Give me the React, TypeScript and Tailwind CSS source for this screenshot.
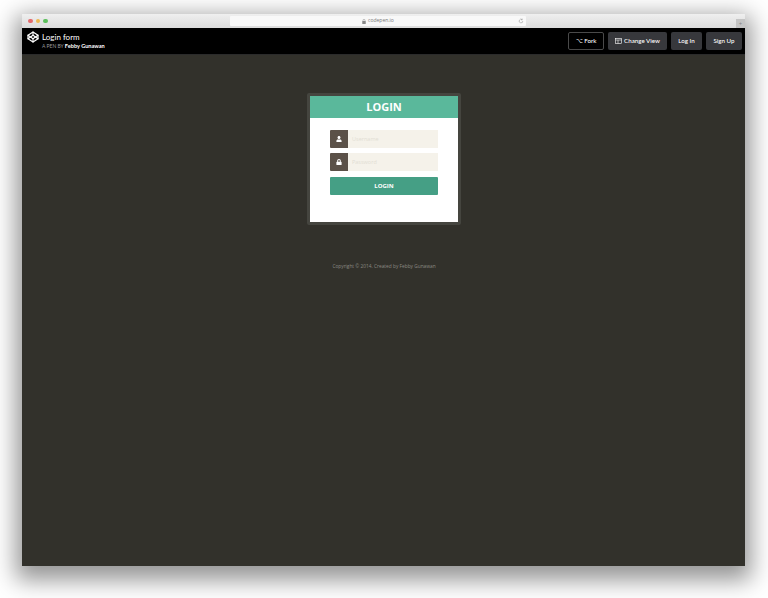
import { Codepen } from "lucide-react";
import { FaUser, FaLock } from "react-icons/fa";

const sans = "font-['Open_Sans','Liberation_Sans',sans-serif]";
const lato = "font-['Lato','Liberation_Sans',sans-serif]";

function NavButton({ children, className = "" }: { children: React.ReactNode; className?: string }) {
  return (
    <div className={`h-[18px] flex items-center justify-center rounded-[2px] bg-[#37383c] text-white text-[6.2px] font-medium ${lato} ${className}`}>
      {children}
    </div>
  );
}

function Field({ icon, placeholder, className = "" }: { icon: React.ReactNode; placeholder: string; className?: string }) {
  return (
    <div className={`flex h-[18px] ${className}`}>
      <div className="w-[18px] flex items-center justify-center bg-[#5b5148] text-white rounded-l-[1px]">{icon}</div>
      <div className={`flex-1 bg-[#f5f2ea] flex items-center pl-[4px] text-[5.5px] text-[#e2ded4] ${sans}`}>{placeholder}</div>
    </div>
  );
}

export default function App() {
  return (
    <div className="w-[768px] h-[598px] bg-white overflow-hidden pt-[14px] pl-[22px]">
      <div className="w-[723px] h-[552px] flex flex-col shadow-[0_8px_22px_6px_rgba(0,0,0,0.42)]">
        <div className="h-[14px] flex items-center bg-gradient-to-b from-[#efefef] to-[#dcdcdc] pl-[6px] relative">
          <div className="flex gap-[3px] w-[202px]">
            <span className="w-[4.5px] h-[4.5px] rounded-full bg-[#e46a6c]" />
            <span className="w-[4.5px] h-[4.5px] rounded-full bg-[#eeb950]" />
            <span className="w-[4.5px] h-[4.5px] rounded-full bg-[#5cc05c]" />
          </div>
          <div className={`w-[296px] h-[10px] bg-[#f8f8f8] rounded-[1px] flex items-center justify-center relative text-[5px] text-[#777777] ${sans}`}>
            <svg width="4" height="5" viewBox="0 0 8 10" className="mr-[2px]" fill="#888888">
              <rect x="0.5" y="4" width="7" height="6" rx="1" />
              <path d="M2 4V2.6a2 2 0 0 1 4 0V4" fill="none" stroke="#888888" />
            </svg>
            codepen.io
            <svg width="6" height="6" viewBox="0 0 10 10" className="absolute right-[2px]" fill="none" stroke="#999999" strokeWidth="1">
              <path d="M8 5a3 3 0 1 1-1-2.2M7 1v2H5" />
            </svg>
          </div>
          <div className="ml-auto w-[9px] h-[9px] self-end bg-[#c4c4c4] flex items-center justify-center text-[6px] leading-none text-[#888888]">+</div>
        </div>

        <div className="h-[27px] bg-black flex items-start border-b border-[#2b2b2b] pl-[5px] pr-[3px]">
          <Codepen size={12} color="#ffffff" strokeWidth={2.4} className="mt-[3px]" />
          <div className={`ml-[3px] mt-[4px] flex flex-col ${lato}`}>
            <div className="text-white text-[8px] leading-[10px]">Login form</div>
            <div className="text-[5px] leading-[7px] text-[#9a9a9a]">
              A PEN BY <span className="text-white font-bold text-[5.6px]">Febby Gunawan</span>
            </div>
          </div>
          <div className="ml-auto mt-[4px] flex gap-[4px]">
            <NavButton className="w-[36px] bg-black border border-[#4a4a4a]">⌥ Fork</NavButton>
            <NavButton className="w-[59px]">
              <svg width="7" height="6" viewBox="0 0 14 12" className="mr-[2px]" fill="none" stroke="#ffffff" strokeWidth="1.2">
                <rect x="1" y="1" width="12" height="10" />
                <path d="M1 4h12M6 4v7" />
              </svg>
              Change View
            </NavButton>
            <NavButton className="w-[31px]">Log In</NavButton>
            <NavButton className="w-[36px]">Sign Up</NavButton>
          </div>
        </div>

        <div className="flex-1 bg-[#32312b] flex flex-col items-center pt-[38px] pl-[1px]">
          <div className="w-[154px] border-[3px] border-[#45453f] rounded-[2px]">
            <div className={`h-[22px] bg-[#5ab89b] flex items-center justify-center text-white text-[11px] font-bold ${sans}`}>LOGIN</div>
            <div className="h-[104px] bg-white px-[20px] pt-[12px] flex flex-col">
              <Field icon={<FaUser size={6} />} placeholder="Username" />
              <Field icon={<FaLock size={6} />} placeholder="Password" className="mt-[5px]" />
              <div className={`mt-[6px] h-[18px] bg-[#459f85] rounded-[1px] flex items-center justify-center text-white text-[6px] font-bold ${sans}`}>LOGIN</div>
            </div>
          </div>
          <div className={`mt-[37px] text-[4.8px] leading-[8px] text-[#8b8a83] ${sans}`}>Copyright © 2014. Created by Febby Gunawan</div>
        </div>
      </div>
    </div>
  );
}
